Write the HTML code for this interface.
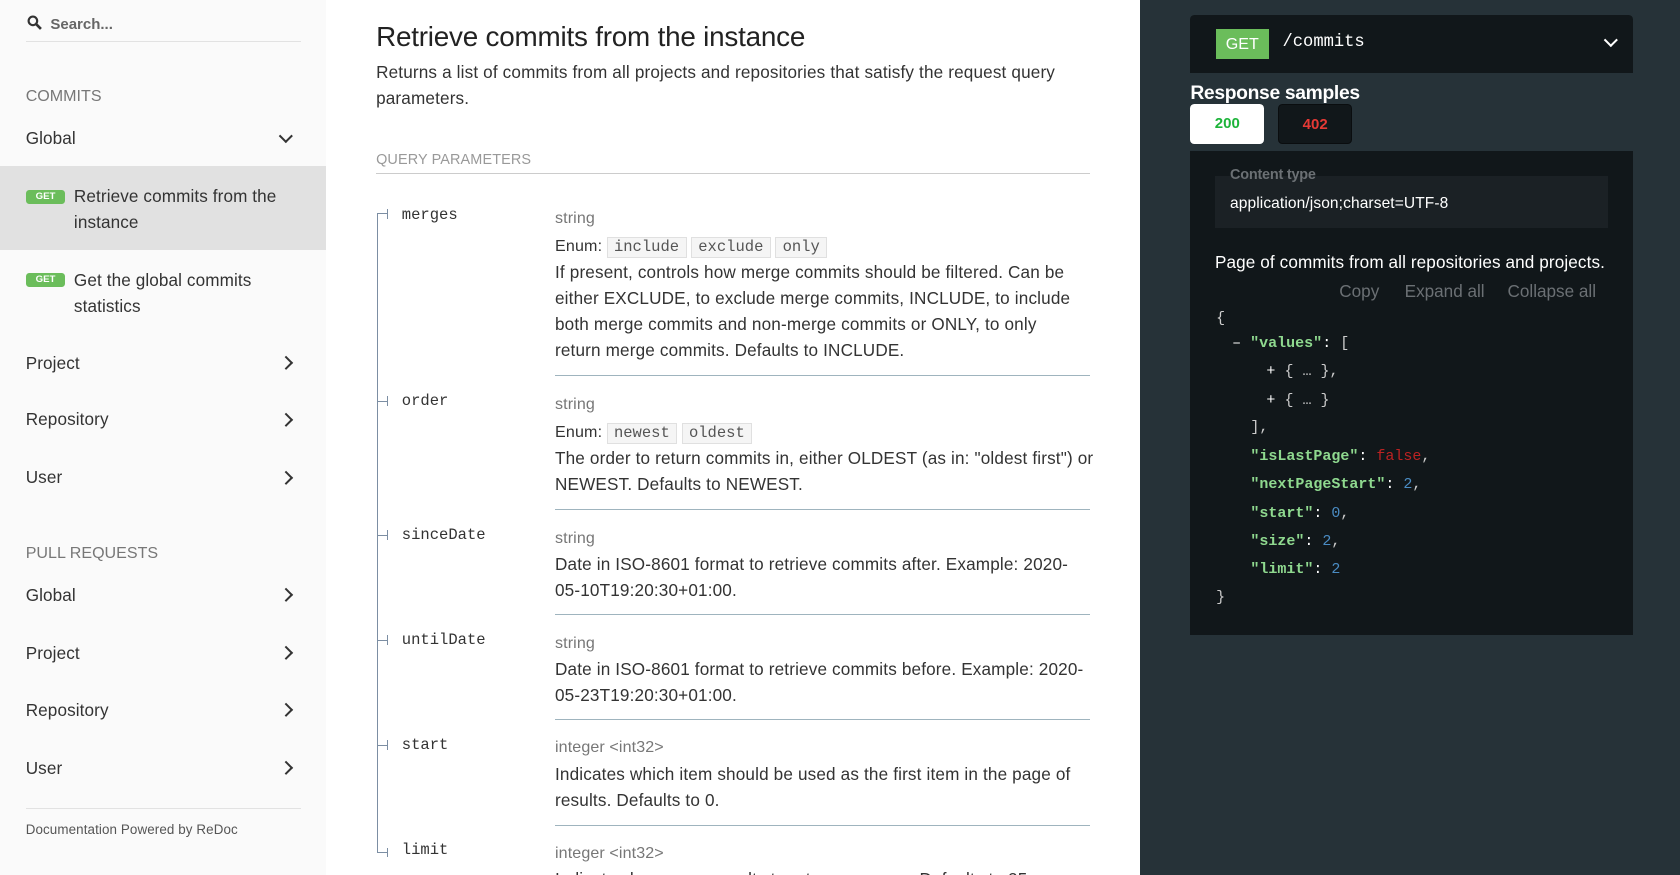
<!DOCTYPE html>
<html><head><meta charset="utf-8"><style>
*{margin:0;padding:0;box-sizing:border-box}
html,body{width:1680px;height:875px;overflow:hidden;background:#fff}
#w{zoom:1.07143;width:1568px;height:817px;position:relative;font-family:"Liberation Sans",sans-serif;color:#333}
.a{position:absolute;white-space:nowrap}
#side{position:absolute;left:0;top:0;width:304px;height:817px;background:#fafafa}
.nav{position:absolute;left:24px;font-size:16px;color:#333;letter-spacing:0.1px;line-height:20px}
.chev{position:absolute;left:262px;width:9px;height:9px;border-right:2px solid #333;border-bottom:2px solid #333}
.r{transform:rotate(-45deg)}.d{transform:rotate(45deg)}
.cap{position:absolute;left:24px;font-size:15px;color:#777;letter-spacing:0px}
.get{position:absolute;left:24px;width:37px;height:13px;background:#6bbd5b;color:#fff;font-size:9px;font-weight:bold;text-align:center;line-height:13px;border-radius:3px}
.txt{font-size:16px;letter-spacing:0.15px;color:#333}
.mono{font-family:"Liberation Mono",monospace}
.pn{position:absolute;left:375px;font-size:14.5px;color:#333;font-family:"Liberation Mono",monospace}
.tk{position:absolute;left:352px;width:10px;height:9px;border-top:1px solid #7c8ea3;border-right:1px solid #7c8ea3;margin-top:-4px;border-top:none}
.tk:before{content:"";position:absolute;left:0;top:4px;width:10px;border-top:1px solid #7c8ea3}
.ty{position:absolute;left:518px;font-size:15px;color:#777;letter-spacing:0.1px}
.ds{position:absolute;left:518px;font-size:16px;color:#333;letter-spacing:0.15px;line-height:24.3px}
.sep{position:absolute;left:518px;width:499px;border-top:1px solid #9fb4be}
.en{display:inline-block;font-family:"Liberation Mono",monospace;font-size:14.5px;color:#555;background:#f5f5f5;border:1px solid #e0e0e0;padding:0 6px;margin-left:4px;line-height:18px;letter-spacing:0}
.js{position:absolute;font-family:"Liberation Mono",monospace;font-size:14px;color:#ccc}
.k{color:#8fd98f;font-weight:bold}
.n{color:#4a8bc2}.f{color:#b22}
</style></head><body><div id="w">
<div id="side">
 <svg class="a" style="left:25px;top:14px" width="14" height="14" viewBox="0 0 14 14"><circle cx="5.5" cy="5.5" r="4" stroke="#333" stroke-width="2" fill="none"/><path d="M8.5 8.5L13 13" stroke="#333" stroke-width="2.5"/></svg>
 <div class="a" style="left:47px;top:15px;font-size:14px;font-weight:bold;color:#666">Search...</div>
 <div class="a" style="left:24px;top:38px;width:257px;border-top:1px solid #e2e2e2"></div>
 <div class="cap" style="top:81px">COMMITS</div>
 <div class="nav" style="top:119px">Global</div><div class="chev d" style="top:122px"></div>
 <div class="a" style="left:0;top:155px;width:304px;height:78px;background:#e1e1e1"></div>
 <div class="get" style="top:177px">GET</div>
 <div class="nav" style="left:69px;top:171px;line-height:24.5px">Retrieve commits from the<br>instance</div>
 <div class="get" style="top:255px">GET</div>
 <div class="nav" style="left:69px;top:249px;line-height:24.5px">Get the global commits<br>statistics</div>
 <div class="nav" style="top:329px">Project</div><div class="chev r" style="top:334px"></div>
 <div class="nav" style="top:382px">Repository</div><div class="chev r" style="top:387px"></div>
 <div class="nav" style="top:436px">User</div><div class="chev r" style="top:441px"></div>
 <div class="cap" style="top:508px">PULL REQUESTS</div>
 <div class="nav" style="top:546px">Global</div><div class="chev r" style="top:551px"></div>
 <div class="nav" style="top:600px">Project</div><div class="chev r" style="top:605px"></div>
 <div class="nav" style="top:653px">Repository</div><div class="chev r" style="top:658px"></div>
 <div class="nav" style="top:707px">User</div><div class="chev r" style="top:712px"></div>
 <div class="a" style="left:24px;top:754px;width:257px;border-top:1px solid #e2e2e2"></div>
 <div class="a" style="left:24px;top:767px;font-size:12.5px;color:#555;letter-spacing:0.1px">Documentation Powered by ReDoc</div>
</div>

<div class="a" style="left:351px;top:20px;font-size:26px;color:#222;letter-spacing:-0.2px">Retrieve commits from the instance</div>
<div class="a txt" style="left:351px;top:55px;line-height:24.3px">Returns a list of commits from all projects and repositories that satisfy the request query<br>parameters.</div>
<div class="a" style="left:351px;top:142px;font-size:13.5px;color:#999;letter-spacing:0.1px">QUERY PARAMETERS</div>
<div class="a" style="left:351px;top:161px;width:666px;border-top:1px solid #ccc"></div>
<div class="a" style="left:352px;top:199px;height:597px;border-left:1px solid #7c8ea3"></div>

<div class="tk" style="top:199px"></div><div class="pn" style="top:192px">merges</div>
<div class="ty" style="top:195px">string</div>
<div class="ds" style="top:217px;font-size:15px">Enum:<span class="en">include</span><span class="en">exclude</span><span class="en">only</span></div>
<div class="ds" style="top:242px">If present, controls how merge commits should be filtered. Can be<br>either EXCLUDE, to exclude merge commits, INCLUDE, to include<br>both merge commits and non-merge commits or ONLY, to only<br>return merge commits. Defaults to INCLUDE.</div>
<div class="sep" style="top:350px"></div>

<div class="tk" style="top:374px"></div><div class="pn" style="top:366px">order</div>
<div class="ty" style="top:369px">string</div>
<div class="ds" style="top:391px;font-size:15px">Enum:<span class="en">newest</span><span class="en">oldest</span></div>
<div class="ds" style="top:415px">The order to return commits in, either OLDEST (as in: "oldest first") or<br>NEWEST. Defaults to NEWEST.</div>
<div class="sep" style="top:475px"></div>

<div class="tk" style="top:499px"></div><div class="pn" style="top:491px">sinceDate</div>
<div class="ty" style="top:494px">string</div>
<div class="ds" style="top:514px">Date in ISO-8601 format to retrieve commits after. Example: 2020-<br>05-10T19:20:30+01:00.</div>
<div class="sep" style="top:573px"></div>

<div class="tk" style="top:597px"></div><div class="pn" style="top:589px">untilDate</div>
<div class="ty" style="top:592px">string</div>
<div class="ds" style="top:612px">Date in ISO-8601 format to retrieve commits before. Example: 2020-<br>05-23T19:20:30+01:00.</div>
<div class="sep" style="top:671px"></div>

<div class="tk" style="top:695px"></div><div class="pn" style="top:687px">start</div>
<div class="ty" style="top:689px">integer &lt;int32&gt;</div>
<div class="ds" style="top:710px">Indicates which item should be used as the first item in the page of<br>results. Defaults to 0.</div>
<div class="sep" style="top:770px"></div>

<div class="tk" style="top:795px"></div><div class="pn" style="top:785px">limit</div>
<div class="ty" style="top:788px">integer &lt;int32&gt;</div>
<div class="ds" style="top:808px">Indicates how many results to return per page. Defaults to 25.</div>

<div class="a" style="left:1064px;top:0;width:504px;height:817px;background:#263238"></div>
<div class="a" style="left:1111px;top:14px;width:413px;height:54px;background:#11171a;border-radius:4px 4px 0 0"></div>
<div class="a" style="left:1135px;top:27px;width:49px;height:28px;background:#6bbd5b;color:#fff;font-size:15px;text-align:center;line-height:28px">GET</div>
<div class="a mono" style="left:1197px;top:31px;font-size:16px;color:#fff">/commits</div>
<div class="chev d" style="left:1499px;top:33px;border-color:#fff"></div>
<div class="a" style="left:1111px;top:77px;font-size:18px;font-weight:bold;color:#fff;letter-spacing:-0.3px">Response samples</div>
<div class="a" style="left:1111px;top:97px;width:69px;height:37px;background:#fff;border-radius:4px;color:#1db43a;font-weight:bold;font-size:14px;text-align:center;line-height:37px">200</div>
<div class="a" style="left:1193px;top:97px;width:69px;height:37px;background:#11171a;border:1px solid #0a0d0f;border-radius:4px;color:#e53935;font-weight:bold;font-size:14px;text-align:center;line-height:37px">402</div>
<div class="a" style="left:1111px;top:141px;width:413px;height:452px;background:#11171a"></div>
<div class="a" style="left:1134px;top:164px;width:367px;height:49px;background:#1b2125"></div>
<div class="a" style="left:1148px;top:156px;font-size:13.5px;font-weight:bold;color:#6b7074;letter-spacing:-0.2px">Content type</div>
<div class="a" style="left:1148px;top:182px;font-size:14.5px;color:#fff;letter-spacing:0.1px">application/json;charset=UTF-8</div>
<div class="a" style="left:1134px;top:235px;font-size:16px;color:#fff;letter-spacing:0.1px">Page of commits from all repositories and projects.</div>
<div class="a" style="left:1250px;top:262px;font-size:16px;color:#6b7074">Copy</div>
<div class="a" style="left:1311px;top:262px;font-size:16px;color:#6b7074">Expand all</div>
<div class="a" style="left:1407px;top:262px;font-size:16px;color:#6b7074">Collapse all</div>
<div class="js" style="left:1135px;top:289px">{</div>
<div class="js" style="left:1150px;top:313px"><span style="color:#fff">–</span> <span class="k">"values"</span><span style="color:#fff">:</span> [</div>
<div class="js" style="left:1182px;top:339px"><span style="color:#fff">+</span> { … },</div>
<div class="js" style="left:1182px;top:366px"><span style="color:#fff">+</span> { … }</div>
<div class="js" style="left:1167px;top:391px">],</div>
<div class="js" style="left:1167px;top:418px"><span class="k">"isLastPage"</span><span style="color:#fff">:</span> <span class="f">false</span>,</div>
<div class="js" style="left:1167px;top:444px"><span class="k">"nextPageStart"</span><span style="color:#fff">:</span> <span class="n">2</span>,</div>
<div class="js" style="left:1167px;top:471px"><span class="k">"start"</span><span style="color:#fff">:</span> <span class="n">0</span>,</div>
<div class="js" style="left:1167px;top:497px"><span class="k">"size"</span><span style="color:#fff">:</span> <span class="n">2</span>,</div>
<div class="js" style="left:1167px;top:524px"><span class="k">"limit"</span><span style="color:#fff">:</span> <span class="n">2</span></div>
<div class="js" style="left:1135px;top:550px">}</div>
</div></body></html>
